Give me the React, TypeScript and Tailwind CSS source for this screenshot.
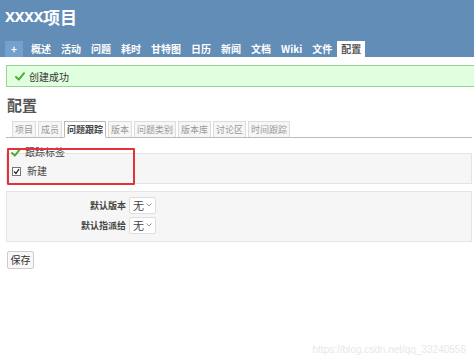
import React from "react";

const font = { fontFamily: '"Noto Sans CJK SC", "Liberation Sans", sans-serif' };

function Check({ className = "" }: { className?: string }) {
  return (
    <svg width="10" height="9" viewBox="0 0 10 9" className={className}>
      <path d="M1 5 L3.8 7.6 L9 1.2" stroke="#4caf2c" strokeWidth="2" fill="none" strokeLinecap="round" strokeLinejoin="round" />
    </svg>
  );
}

export default function App() {
  const menu = ["概述", "活动", "问题", "耗时", "甘特图", "日历", "新闻", "文档", "Wiki", "文件"];
  const tabs = ["项目", "成员", "问题跟踪", "版本", "问题类别", "版本库", "讨论区", "时间跟踪"];
  return (
    <div className="w-[474px] h-[361px] bg-white relative overflow-hidden text-[#333]" style={font}>
      <div className="bg-[#628db6] h-[57px] pl-[5px] flex flex-col">
        <div className="text-white font-bold text-[17px] leading-none mt-[5px] h-[20px] flex items-end">
          <span style={{ fontFamily: '"Liberation Sans", sans-serif' }} className="text-[18px] tracking-[-0.5px]">xxxx</span>
          <span>项目</span>
        </div>
        <div className="flex items-end mt-auto h-[16px] text-[10px] font-bold text-white">
          <div className="w-[18px] h-[16px] bg-[#759fcf] flex items-center justify-center leading-none">+</div>
          <div className="flex items-center h-[16px] leading-none ml-[3px]">
            {menu.map((m) => (
              <span key={m} className="px-[5px]">{m}</span>
            ))}
          </div>
          <div className="w-[28px] h-[16px] bg-white text-[#555] flex items-center justify-center leading-none">配置</div>
        </div>
      </div>

      <div className="ml-[6px] mt-[8px] h-[22px] bg-[#dfffdf] border border-[#9fcf9f] border-r-0 flex items-center pl-[8px] gap-[4px] text-[10px] text-[#333]">
        <Check />
        <span>创建成功</span>
      </div>

      <div className="ml-[7px] mt-[9px] text-[15px] font-bold text-[#555] leading-[18px]">配置</div>

      <div className="mt-[8px] ml-[6px] mr-[2px] border-b border-[#bbb] h-[16px] flex items-end pl-[6px] gap-[2px] text-[9px]">
        {tabs.map((t) => (
          <div
            key={t}
            className={
              t === "问题跟踪"
                ? "h-[17px] -mb-px px-[2px] bg-white border border-[#bbb] border-b-white font-bold text-[#444] flex items-center leading-none"
                : "h-[16px] px-[2px] bg-[#f6f6f6] border border-[#ddd] border-b-0 text-[#999] flex items-center leading-none"
            }
          >
            {t}
          </div>
        ))}
      </div>

      <div className="relative mt-[15px] ml-[6px] mr-[2px] h-[31px] bg-[#f6f6f6] border border-[#e4e4e4]">
        <div className="absolute left-[4px] top-[-7px] flex items-center gap-[4px] text-[10px] text-[#444] leading-none">
          <Check />
          <span>跟踪标签</span>
        </div>
        <div className="absolute left-[5px] top-[12px] flex items-center gap-[6px] text-[10px] text-[#444] leading-none">
          <span className="w-[9px] h-[9px] border border-[#777] bg-white flex items-center justify-center">
            <svg width="7" height="7" viewBox="0 0 7 7"><path d="M1 3.5 L3 5.5 L6 1" stroke="#222" strokeWidth="1.3" fill="none" /></svg>
          </span>
          <span>新建</span>
        </div>
      </div>
      <div className="absolute left-[7px] top-[148px] w-[128px] h-[37px] border-2 border-[#e0333b] rounded-[1px] pointer-events-none" />

      <div className="mt-[7px] ml-[6px] mr-[2px] h-[51px] bg-[#f6f6f6] border border-[#e4e4e4] flex flex-col gap-[4px] pt-[5px] text-[9px] text-[#444]">
        {["默认版本", "默认指派给"].map((l) => (
          <div key={l} className="flex items-center h-[16px]">
            <span className="w-[119px] text-right font-bold leading-none">{l}</span>
            <span className="ml-[3px] w-[27px] h-[17px] bg-white border border-[#ddd] rounded-[2px] flex items-center px-[3px] gap-[2px] text-[11px] text-[#444] leading-none">
              无
              <svg width="6" height="4" viewBox="0 0 6 4"><path d="M0.5 0.5 L3 3 L5.5 0.5" stroke="#999" fill="none" /></svg>
            </span>
          </div>
        ))}
      </div>

      <div className="mt-[9px] ml-[7px] w-[27px] h-[18px] border border-[#ccc] rounded-[2px] bg-[#f8f8f8] text-[10px] text-[#333] flex items-center justify-center leading-none">保存</div>

      <div className="absolute right-[8px] bottom-[6px] text-[10px] text-[#e8e8e8] leading-none" style={{ fontFamily: '"Liberation Sans", sans-serif' }}>
        https://blog.csdn.net/qq_33240556
      </div>
    </div>
  );
}
